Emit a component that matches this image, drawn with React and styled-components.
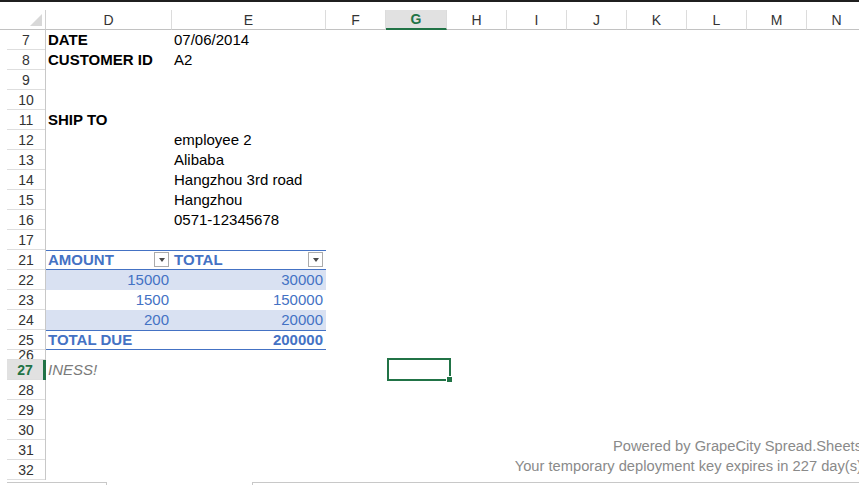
import React from 'react';
import styled, { createGlobalStyle, css } from 'styled-components';

const green = '#217346';
const blue = '#4472C4';
const band = '#D9E1F2';
const COLS = '46px 126px 154px 60px 61px 60px 60px 60px 60px 60px 60px 60px';
const LETTERS = ['D', 'E', 'F', 'G', 'H', 'I', 'J', 'K', 'L', 'M', 'N'];

const GlobalStyle = createGlobalStyle`
  html, body {
    margin: 0;
    padding: 0;
    background: #fff;
    overflow: hidden;
  }
  body {
    font-family: 'Liberation Sans', Arial, sans-serif;
  }
`;

const Sheet = styled.div`
  position: relative;
  width: 859px;
  height: 485px;
  overflow: hidden;
  background: #fff;
`;

const TopBar = styled.div`
  height: 2px;
  background: #1f1f1f;
  margin-bottom: 8px;
`;

const HeaderRow = styled.div`
  display: grid;
  grid-template-columns: ${COLS};
  height: 20px;
`;

const Corner = styled.div`
  display: flex;
  box-sizing: border-box;
  border-right: 1px solid #d0d0d0;
  border-bottom: 1px solid #c2c2c2;
`;

const CornerMark = styled.span`
  width: 0;
  height: 0;
  margin: auto 3px 3px auto;
  border-left: 12px solid transparent;
  border-bottom: 12px solid #d8d8d8;
`;

const ColHead = styled.div`
  display: flex;
  align-items: center;
  justify-content: center;
  box-sizing: border-box;
  border-right: 1px solid #dcdcdc;
  border-bottom: 1px solid #c2c2c2;
  font-size: 14px;
  color: #333;
  ${(p) =>
    p.$active &&
    css`
      background: #e1e1e1;
      color: ${green};
      font-weight: bold;
      border-bottom: 2px solid ${green};
    `}
`;

const Row = styled.div`
  display: grid;
  grid-template-columns: ${COLS};
  height: ${(p) => p.$h || 20}px;
`;

const RowHead = styled.div`
  display: flex;
  box-sizing: border-box;
  padding-left: 7px;
  border-right: ${(p) => (p.$active ? `3px solid ${green}` : '1px solid #c8c8c8')};
  overflow: hidden;
`;

const RowNum = styled.div`
  flex: 1;
  display: flex;
  align-items: center;
  justify-content: center;
  border-bottom: 1px solid #dedede;
  font-size: 14px;
  line-height: 14px;
  color: #333;
  overflow: hidden;
  ${(p) =>
    p.$active &&
    css`
      background: #e1e1e1;
      color: ${green};
      font-weight: bold;
    `}
`;

const Cell = styled.div`
  position: relative;
  display: flex;
  align-items: center;
  justify-content: ${(p) => (p.$right ? 'flex-end' : 'space-between')};
  box-sizing: border-box;
  padding: 0 ${(p) => (p.$right ? 3 : 2)}px 1px 2px;
  font-size: 15px;
  white-space: nowrap;
  color: ${(p) => p.$color || '#000'};
  font-weight: ${(p) => (p.$bold ? 'bold' : 'normal')};
  font-style: ${(p) => (p.$italic ? 'italic' : 'normal')};
  background: ${(p) => p.$fill || 'transparent'};
  border-top: ${(p) => (p.$lineTop ? `1px solid ${blue}` : 'none')};
  border-bottom: ${(p) => (p.$lineBottom ? `1px solid ${blue}` : 'none')};
`;

const FilterButton = styled.span`
  display: flex;
  align-items: center;
  justify-content: center;
  width: 15px;
  height: 15px;
  box-sizing: border-box;
  margin-right: 1px;
  border: 1px solid #ababab;
  background: #fff;

  &::before {
    content: '';
    border-top: 4px solid #4a4a4a;
    border-left: 3.5px solid transparent;
    border-right: 3.5px solid transparent;
  }
`;

const Selection = styled.div`
  position: absolute;
  top: -2px;
  left: 1px;
  right: -4px;
  bottom: -1px;
  border: 2px solid ${green};
  pointer-events: none;
`;

const Handle = styled.span`
  position: absolute;
  right: -4px;
  bottom: -4px;
  width: 5px;
  height: 5px;
  background: ${green};
  border: 1px solid #fff;
`;

const Notice = styled.div`
  position: absolute;
  top: 436px;
  right: -3px;
  text-align: right;
  font-size: 14.7px;
  line-height: 20px;
  color: #8a8a8a;
  white-space: nowrap;
`;

const TabStrip = styled.div`
  display: flex;
  height: 5px;
  padding-top: 2px;
  box-sizing: border-box;
`;

const TabNav = styled.div`
  width: 99px;
  margin-left: 7px;
  border-top: 1px solid #c8c8c8;
  border-right: 1px solid #c8c8c8;
`;

const TabSpace = styled.div`
  width: 145px;
`;

const ScrollTrack = styled.div`
  flex: 1;
  border-top: 1px solid #c8c8c8;
  border-left: 1px solid #c8c8c8;
`;

const SheetRow = ({ n, h, active, d, e, selectG }) => (
  <Row $h={h}>
    <RowHead $active={active}>
      <RowNum $active={active}>{n}</RowNum>
    </RowHead>
    {d || <Cell />}
    {e || <Cell />}
    {LETTERS.slice(2).map((l) => (
      <Cell key={l}>
        {selectG && l === 'G' && (
          <Selection>
            <Handle />
          </Selection>
        )}
      </Cell>
    ))}
  </Row>
);

const info = [
  [7, 'DATE', '07/06/2014'],
  [8, 'CUSTOMER ID', 'A2'],
  [9],
  [10],
  [11, 'SHIP TO'],
  [12, null, 'employee 2'],
  [13, null, 'Alibaba'],
  [14, null, 'Hangzhou 3rd road'],
  [15, null, 'Hangzhou'],
  [16, null, '0571-12345678'],
  [17],
];

const items = [
  [22, '15000', '30000', band],
  [23, '1500', '150000'],
  [24, '200', '20000', band],
];

const App = () => (
  <Sheet>
    <GlobalStyle />
    <TopBar />
    <HeaderRow>
      <Corner>
        <CornerMark />
      </Corner>
      {LETTERS.map((l) => (
        <ColHead key={l} $active={l === 'G'}>
          {l}
        </ColHead>
      ))}
    </HeaderRow>

    {info.map(([n, d, e]) => (
      <SheetRow
        key={n}
        n={n}
        d={d && <Cell $bold>{d}</Cell>}
        e={e && <Cell>{e}</Cell>}
      />
    ))}

    <SheetRow
      n={21}
      d={
        <Cell $bold $color={blue} $lineTop $lineBottom>
          AMOUNT
          <FilterButton />
        </Cell>
      }
      e={
        <Cell $bold $color={blue} $lineTop $lineBottom>
          TOTAL
          <FilterButton />
        </Cell>
      }
    />
    {items.map(([n, a, t, fill]) => (
      <SheetRow
        key={n}
        n={n}
        d={
          <Cell $right $color={blue} $fill={fill}>
            {a}
          </Cell>
        }
        e={
          <Cell $right $color={blue} $fill={fill}>
            {t}
          </Cell>
        }
      />
    ))}
    <SheetRow
      n={25}
      d={
        <Cell $bold $color={blue} $lineTop $lineBottom>
          TOTAL DUE
        </Cell>
      }
      e={
        <Cell $right $bold $color={blue} $lineTop $lineBottom>
          200000
        </Cell>
      }
    />
    <SheetRow n={26} h={10} />
    <SheetRow
      n={27}
      active
      selectG
      d={
        <Cell $italic $color="#7a7a7a">
          INESS!
        </Cell>
      }
    />
    {[28, 29, 30, 31, 32].map((n) => (
      <SheetRow key={n} n={n} />
    ))}

    <TabStrip>
      <TabNav />
      <TabSpace />
      <ScrollTrack />
    </TabStrip>

    <Notice>
      Powered by GrapeCity Spread.Sheets
      <br />
      Your temporary deployment key expires in 227 day(s)
    </Notice>
  </Sheet>
);

export default App;
